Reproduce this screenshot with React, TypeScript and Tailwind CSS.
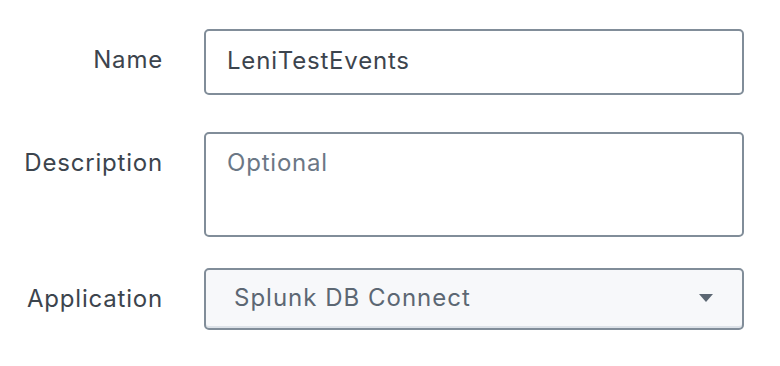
import React from "react";

function Caret() {
  return (
    <svg width="16" height="9" viewBox="0 0 16 9" className="text-[#5c6773]">
      <path d="M1 0h14L8 8z" fill="currentColor" />
    </svg>
  );
}

export default function App() {
  return (
    <div className="h-[366px] w-[780px] bg-white font-['Inter','Liberation_Sans',sans-serif] text-[24px] tracking-[0.8px] text-[#3c444d]">
      <div className="flex flex-col pt-[29px]">
        <div className="flex items-center">
          <label className="w-[163px] pb-[5px] text-right">Name</label>
          <div className="ml-[41px] flex h-[66px] w-[540px] items-center rounded-[5px] border-2 border-[#818d99] px-[21px] pb-[2px]">
            LeniTestEvents
          </div>
        </div>

        <div className="mt-[37px] flex items-start">
          <label className="w-[163px] pt-[13px] text-right">Description</label>
          <div className="ml-[41px] h-[105px] w-[540px] rounded-[5px] border-2 border-[#818d99] px-[21px] pt-[11px] text-[#6b7785]">
            Optional
          </div>
        </div>

        <div className="mt-[31px] flex items-center">
          <label className="w-[163px] text-right">Application</label>
          <div className="ml-[41px] flex h-[62px] w-[540px] items-center justify-between rounded-[5px] border-2 border-[#818d99] bg-[#f7f8fa] pl-[28px] pr-[28px] pb-[2px] tracking-[1px] text-[#5c6773] shadow-[inset_0_-2px_0_#dde2e8]">
            <span>Splunk DB Connect</span>
            <Caret />
          </div>
        </div>
      </div>
    </div>
  );
}
